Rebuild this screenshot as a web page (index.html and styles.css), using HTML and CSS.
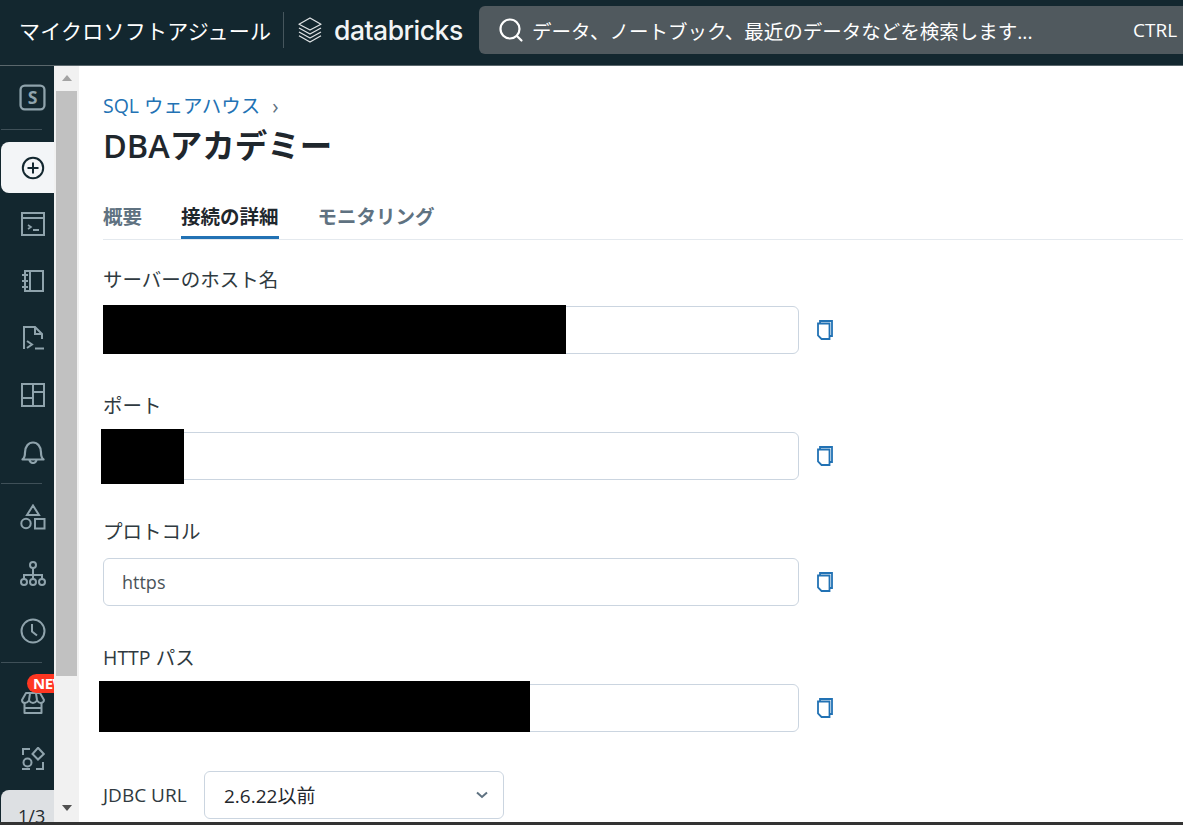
FILE: index.html
```html
<!DOCTYPE html>
<html lang="ja">
<head>
<meta charset="utf-8">
<title>DBAアカデミー</title>
<link rel="stylesheet" href="styles.css">
</head>
<body>
<header class="topbar">
  <span class="tenant">マイクロソフトアジュール</span>
  <span class="top-divider"></span>
  <svg class="logo" viewBox="0 0 24 26" width="24" height="26" fill="none" stroke="#dfe3e5" stroke-width="1.3" stroke-linejoin="round"><path d="M12 1 23 7.2 12 13 1 7.2z"/><path d="M1 11 12 17 23 11"/><path d="M1 15 12 21 23 15"/><path d="M1 18.8 12 25 23 18.8"/></svg>
  <span class="brand">databricks</span>
  <div class="search">
    <svg class="search-icon" viewBox="0 0 26 26" width="26" height="26" fill="none" stroke="#fff" stroke-width="2.2" stroke-linecap="round"><circle cx="12" cy="12" r="9.5"/><path d="M19 19l4.5 4.5"/></svg>
    <span class="search-text">データ、ノートブック、最近のデータなどを検索します...</span>
    <span class="search-key">CTRL</span>
  </div>
</header>
<div class="main">
  <nav class="sidebar">
    <div class="nav-item nav-persona">
      <svg viewBox="0 0 26 26" width="27" height="27" fill="none" stroke="#8fa3ac" stroke-width="2.2"><rect x="1.5" y="1.5" width="23" height="23" rx="4"/><text x="13" y="19" text-anchor="middle" class="s-letter">S</text></svg>
    </div>
    <hr class="nav-rule">
    <div class="nav-new">
      <svg viewBox="0 0 24 24" width="24" height="24" fill="none" stroke="#13272f" stroke-width="2"><circle cx="12" cy="12" r="10.2"/><path d="M12 6.5v11M6.5 12h11"/></svg>
    </div>
    <div class="nav-list">
      <div class="nav-item"><svg viewBox="0 0 24 24" width="24" height="24" fill="none" stroke="#8fa3ac" stroke-width="2"><rect x="1" y="1" width="22" height="22"/><path d="M1 6h22"/><path d="M7 13l3 2-3 2" stroke-width="1.6"/><path d="M12 18h6"/></svg></div>
      <div class="nav-item"><svg viewBox="0 0 24 24" width="24" height="24" fill="none" stroke="#8fa3ac" stroke-width="2"><rect x="4" y="2" width="18" height="20"/><path d="M9 2v20M1 6h6M1 12h6M1 18h6"/></svg></div>
      <div class="nav-item"><svg viewBox="0 0 24 24" width="24" height="24" fill="none" stroke="#8fa3ac" stroke-width="2"><path d="M3 12V1h11l7 7v5"/><path d="M14 1v7h7"/><path d="M3 12v11"/><path d="M6 15l5 3.5-5 3.5"/><path d="M14 22.5h9"/></svg></div>
      <div class="nav-item"><svg viewBox="0 0 24 24" width="24" height="24" fill="none" stroke="#8fa3ac" stroke-width="2"><rect x="1" y="1" width="22" height="22"/><path d="M12 1v22M1 15h11M12 9h11"/></svg></div>
      <div class="nav-item"><svg viewBox="0 0 24 24" width="24" height="24" fill="none" stroke="#8fa3ac" stroke-width="2.2" stroke-linejoin="round"><path d="M1.5 19.5c2-1.500 2.500-3 2.500-7 0-6 3.500-10 8-10s8 4 8 10c0 4 .5 5.500 2.500 7z"/><path d="M8.500 19.500a3.500 3.500 0 0 0 7 0"/></svg></div>
    </div>
    <hr class="nav-rule nav-rule-mid">
    <div class="nav-list">
      <div class="nav-item"><svg viewBox="0 0 26 26" width="26" height="26" fill="none" stroke="#8fa3ac" stroke-width="2"><path d="M13 1.500 19 11H7z"/><circle cx="6" cy="19.500" r="4.700"/><rect x="15" y="15" width="9.500" height="9.500"/></svg></div>
      <div class="nav-item"><svg viewBox="0 0 26 26" width="26" height="26" fill="none" stroke="#8fa3ac" stroke-width="2"><circle cx="13" cy="4" r="3"/><circle cx="4" cy="21" r="3"/><circle cx="13" cy="21" r="3"/><circle cx="22" cy="21" r="3"/><path d="M13 7v11M4 18v-4h18v4"/></svg></div>
      <div class="nav-item"><svg viewBox="0 0 26 26" width="26" height="26" fill="none" stroke="#8fa3ac" stroke-width="2"><circle cx="13" cy="13" r="11.500"/><path d="M12 6v7.500l5 4"/></svg></div>
    </div>
    <hr class="nav-rule nav-rule-low">
    <div class="nav-item nav-market">
      <span class="new-badge">NEW</span>
      <svg viewBox="0 0 24 24" width="24" height="24" fill="none" stroke="#8fa3ac" stroke-width="2" stroke-linejoin="round"><path d="M5 2h14l4 7c0 2-2 3-3.500 3S17 11 16 9.500c-1 1.500-2.500 2.500-4 2.500s-3-1-4-2.500C7 11 5.500 12 4 12S1 11 1 9z"/><path d="M3.500 12v10h17V12"/><path d="M3.500 17h17"/><path d="M9 2.500 8 9M15 2.500 16 9"/></svg>
    </div>
    <div class="nav-item nav-partner">
      <svg viewBox="0 0 24 24" width="24" height="24" fill="none" stroke="#8fa3ac" stroke-width="2"><path d="M9 2H2v6"/><path d="M2 21v1h7"/><path d="M22 15v7h-7"/><path d="M17 .8 22.800 7 17 12.500 11.500 7z"/><circle cx="6.500" cy="15.500" r="4"/></svg>
    </div>
    <div class="page-tab">1/3</div>
  </nav>
  <div class="scrollbar">
    <span class="arrow-up"></span>
    <span class="thumb"></span>
    <span class="arrow-down"></span>
  </div>
  <main class="content">
    <div class="crumbs"><a class="crumb-link">SQL ウェアハウス</a><span class="crumb-sep">›</span></div>
    <h1 class="title">DBAアカデミー</h1>
    <div class="tabs">
      <span class="tab">概要</span>
      <span class="tab tab-active">接続の詳細</span>
      <span class="tab">モニタリング</span>
    </div>
    <section class="field">
      <label class="field-label">サーバーのホスト名</label>
      <div class="field-row">
        <div class="input"><span class="redact redact-host"></span></div>
        <svg class="copy" viewBox="0 0 16 20" width="16" height="20" fill="none" stroke="#2272b4" stroke-width="1.800"><path d="M3 3V1h12v15h-2.500"/><path d="M1 3.500h11.500V19H4.500L1 15.500z" fill="#fff"/></svg>
      </div>
    </section>
    <section class="field">
      <label class="field-label">ポート</label>
      <div class="field-row">
        <div class="input"><span class="redact redact-port"></span></div>
        <svg class="copy" viewBox="0 0 16 20" width="16" height="20" fill="none" stroke="#2272b4" stroke-width="1.800"><path d="M3 3V1h12v15h-2.500"/><path d="M1 3.500h11.500V19H4.500L1 15.500z" fill="#fff"/></svg>
      </div>
    </section>
    <section class="field">
      <label class="field-label">プロトコル</label>
      <div class="field-row">
        <div class="input">https</div>
        <svg class="copy" viewBox="0 0 16 20" width="16" height="20" fill="none" stroke="#2272b4" stroke-width="1.800"><path d="M3 3V1h12v15h-2.500"/><path d="M1 3.500h11.500V19H4.500L1 15.500z" fill="#fff"/></svg>
      </div>
    </section>
    <section class="field">
      <label class="field-label">HTTP パス</label>
      <div class="field-row">
        <div class="input"><span class="redact redact-path"></span></div>
        <svg class="copy" viewBox="0 0 16 20" width="16" height="20" fill="none" stroke="#2272b4" stroke-width="1.800"><path d="M3 3V1h12v15h-2.500"/><path d="M1 3.500h11.500V19H4.500L1 15.500z" fill="#fff"/></svg>
      </div>
    </section>
    <div class="jdbc">
      <span class="jdbc-label">JDBC URL</span>
      <div class="select">
        <span>2.6.22以前</span>
        <svg viewBox="0 0 12 8" width="12" height="8" fill="none" stroke="#5f7281" stroke-width="2"><path d="M1 1.500 6 6l5-4.500"/></svg>
      </div>
    </div>
  </main>
</div>
<div class="bottom-edge"></div>
</body>
</html>
```
FILE: styles.css
```css
* { box-sizing: border-box; }
html, body { margin: 0; padding: 0; }
body {
  width: 1183px;
  height: 825px;
  overflow: hidden;
  display: flex;
  flex-direction: column;
  font-family: "Open Sans", "Noto Sans CJK JP", sans-serif;
  color: #2f3a40;
  background: #fff;
}
.topbar {
  height: 66px;
  flex: none;
  display: flex;
  align-items: center;
  padding: 0 0 5px 19px;
  background: #13272f;
  border-bottom: 1px solid #5a676c;
  color: #fff;
}
.tenant { font-size: 21px; letter-spacing: 0.25px; width: 252px; white-space: nowrap; }
.top-divider { width: 1px; height: 36px; background: #46565d; margin-left: 12px; }
.logo { margin-left: 14px; flex: none; }
.brand {
  font-family: "Inter", sans-serif;
  font-weight: 500;
  font-size: 26.500px;
  letter-spacing: -0.5px;
  margin-left: 12px;
  width: 145px;
  color: #f2f4f5;
}
.search {
  flex: 1;
  height: 48px;
  display: flex;
  align-items: center;
  padding-left: 19px;
  background: #50595e;
  border-radius: 6px 0 0 6px;
  white-space: nowrap;
}
.search-icon { flex: none; }
.search-text { font-size: 19.500px; margin-left: 8px; width: 601px; overflow: hidden; }
.search-key { font-size: 19px; }
.main { flex: 1; min-height: 0; display: flex; }
.sidebar {
  width: 54px;
  flex: none;
  overflow: hidden;
  background: #13272f;
  display: flex;
  flex-direction: column;
  align-items: stretch;
  padding-top: 3px;
}
.nav-item {
  height: 57px;
  flex: none;
  display: flex;
  align-items: center;
  justify-content: center;
  position: relative;
  padding-left: 11px;
}
.nav-persona { height: 56px; }
.s-letter {
  font-family: "Open Sans", sans-serif;
  font-size: 17px;
  font-weight: 700;
  fill: #8fa3ac;
  stroke: none;
}
.nav-rule { width: 41px; height: 1px; border: 0; margin: 4px 0 0 1px; background: #3f5058; flex: none; }
.nav-new {
  height: 51px;
  margin: 12px 0 2px 1px;
  flex: none;
  background: #f3f5f7;
  border-radius: 8px 0 0 8px;
  display: flex;
  align-items: center;
  justify-content: center;
  padding-left: 10px;
}
.nav-list { display: flex; flex-direction: column; flex: none; }
.nav-rule-mid { margin-top: 3px; margin-bottom: 4px; }
.nav-rule-low { margin-top: 3px; margin-bottom: 11px; }
.nav-partner { height: 56px; }
.new-badge {
  position: absolute;
  left: 27px;
  top: 0;
  height: 19px;
  padding: 0 8px 0 6px;
  border-radius: 10px;
  background: #ff3621;
  color: #fff;
  font-size: 15px;
  letter-spacing: -0.5px;
  font-weight: 700;
  line-height: 19px;
}
.page-tab {
  height: 40px;
  margin: 3px 0 0 1px;
  flex: none;
  background: #dde0e3;
  border-radius: 8px 0 0 0;
  padding: 14px 0 0 17px;
  font-size: 18px;
  line-height: 24px;
  color: #1f2a30;
}
.scrollbar {
  width: 25px;
  flex: none;
  background: #f1f1f1;
  display: flex;
  flex-direction: column;
  align-items: center;
}
.arrow-up {
  margin-top: 9px;
  width: 0;
  height: 0;
  border-left: 5.500px solid transparent;
  border-right: 5.500px solid transparent;
  border-bottom: 6px solid #a3a3a3;
}
.thumb { width: 21px; height: 585px; margin-top: 10px; background: #c1c1c1; }
.arrow-down {
  margin-top: 129px;
  width: 0;
  height: 0;
  border-left: 5.500px solid transparent;
  border-right: 5.500px solid transparent;
  border-top: 6px solid #505050;
}
.content { flex: 1; min-width: 0; overflow: hidden; padding: 26px 0 0 24px; }
.crumbs { display: flex; align-items: center; height: 28px; font-size: 19.500px; line-height: 28px; }
.crumb-link { color: #2272b4; }
.crumb-sep { color: #5f7281; margin-left: 12px; font-size: 21px; }
.title { margin: 6px 0 0; font-size: 32.500px; line-height: 40px; font-weight: 600; color: #1f272d; }
.tabs {
  display: flex;
  gap: 39px;
  margin-top: 29px;
  height: 45px;
  border-bottom: 1px solid #e4e9ee;
}
.tab {
  height: 44px;
  font-size: 19.500px;
  line-height: 43px;
  font-weight: 700;
  color: #5f7281;
  white-space: nowrap;
}
.tab-active { color: #1f272d; border-bottom: 3px solid #2272b4; }
.field { height: 126px; padding-top: 26px; }
.field-label { display: block; height: 27px; font-size: 19.500px; line-height: 27px; color: #2f3a40; }
.field-row { display: flex; align-items: center; margin-top: 13px; }
.input {
  position: relative;
  width: 696px;
  height: 48px;
  border: 1px solid #cbd5e0;
  border-radius: 6px;
  padding-left: 18px;
  font-size: 18px;
  line-height: 46px;
  color: #4a5358;
}
.copy { margin-left: 18px; flex: none; }
.redact { position: absolute; background: #000; }
.redact-host { left: -1px; top: -2px; width: 463px; height: 49px; }
.redact-port { left: -3px; top: -4px; width: 83px; height: 55px; }
.redact-path { left: -5px; top: -4px; width: 431px; height: 51px; }
.jdbc { display: flex; align-items: center; margin-top: 27px; }
.jdbc-label { width: 101px; font-size: 19px; color: #2f3a40; }
.select {
  width: 300px;
  height: 48px;
  border: 1px solid #cbd5e0;
  border-radius: 6px;
  display: flex;
  align-items: center;
  justify-content: space-between;
  padding: 0 15px 0 19px;
  font-size: 19px;
  color: #1f272d;
}
.bottom-edge { height: 3px; flex: none; background: #333; }
```
